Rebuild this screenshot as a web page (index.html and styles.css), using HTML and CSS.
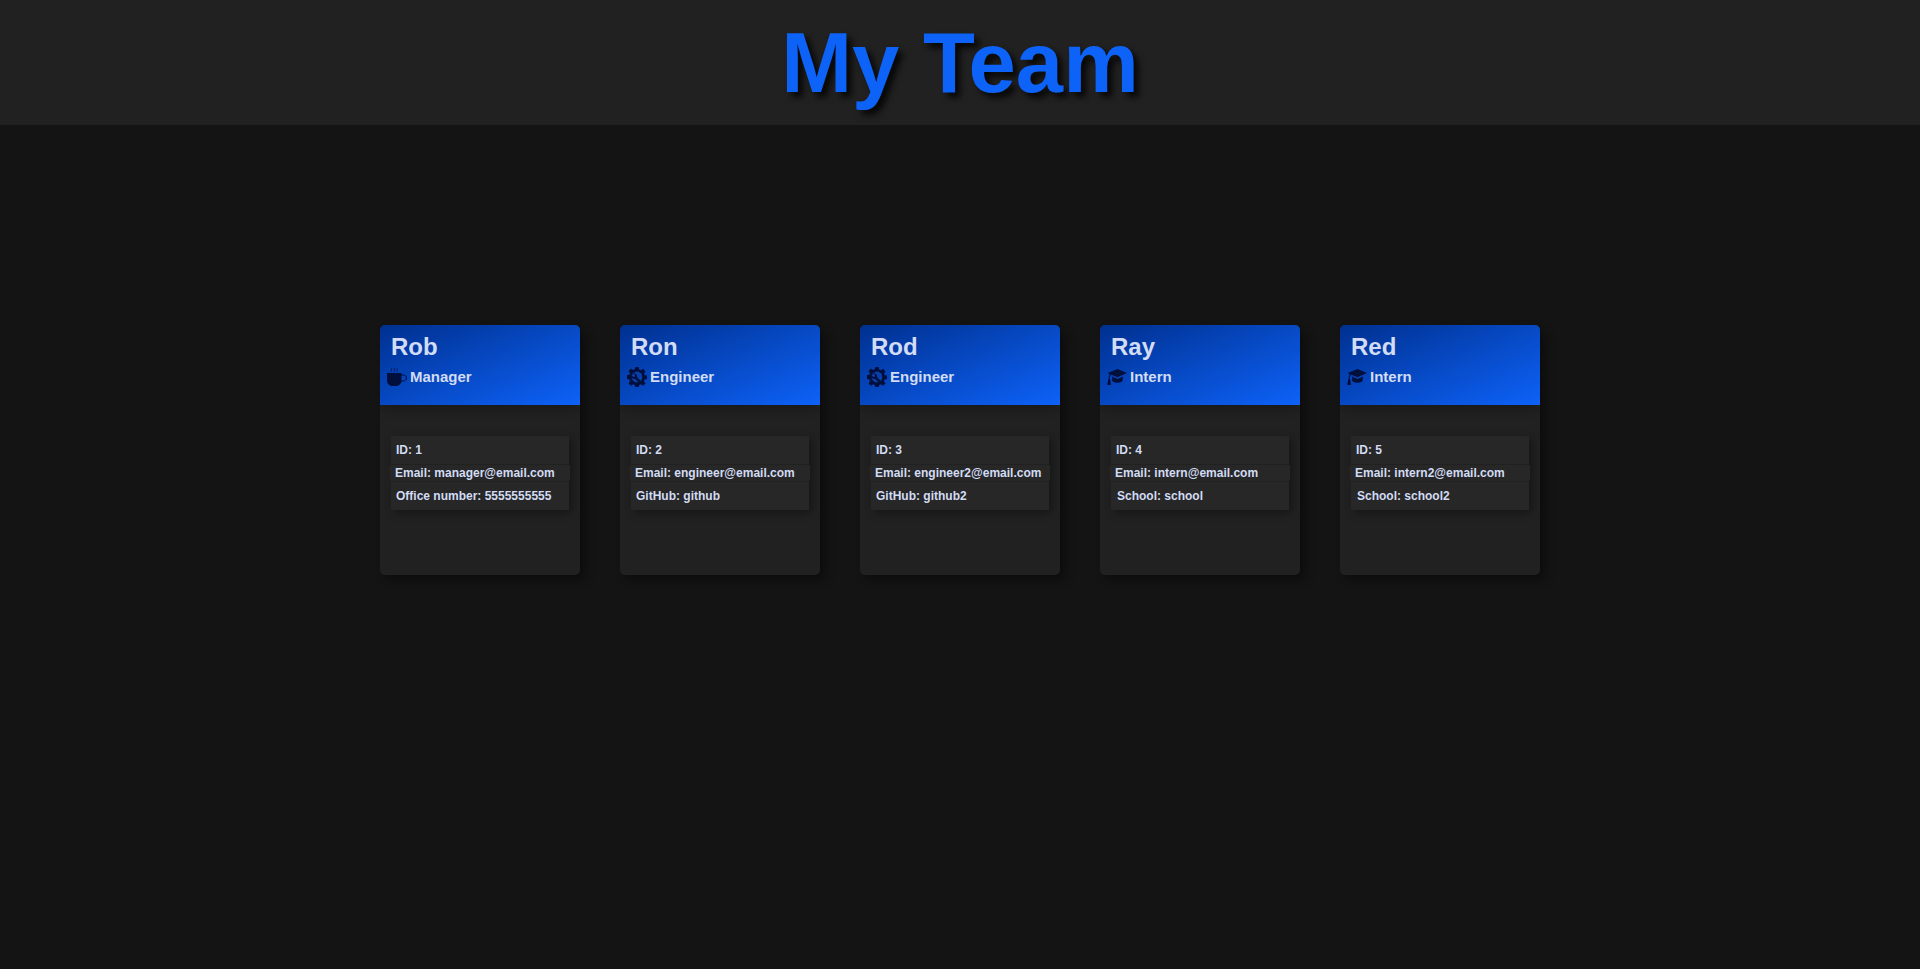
FILE: index.html
```
<!DOCTYPE html>
<html lang="en">
<head>
<meta charset="utf-8">
<title>My Team</title>
<link rel="stylesheet" href="styles.css">
</head>
<body>
<svg class="defs" width="0" height="0" aria-hidden="true">
  <symbol id="i-mug" viewBox="0 0 20 20">
    <path d="M0 6h14.500v7.500c0 3-2.400 5.500-5.400 5.500H5.400C2.400 19 0 16.500 0 13.500z"/>
    <path d="M14 8h2.300c1.900 0 3.200 1.300 3.200 3s-1.400 3-3.200 3h-2.800" fill="none" stroke="currentColor" stroke-width="1"/>
    <path d="M4.300 1v3.800M7.200 1v3.800M10.100 1v3.800" fill="none" stroke="currentColor" stroke-width="1" opacity=".6"/>
  </symbol>
  <symbol id="i-gear" viewBox="0 0 20 20">
    <path d="M8.300 0h3.400l.5 2.600 1.700.7 2.200-1.500 2.400 2.400-1.500 2.200.7 1.700 2.300.5v3.400l-2.300.5-.7 1.700 1.500 2.200-2.400 2.400-2.200-1.500-1.700.7-.5 2.300H8.300l-.5-2.300-1.700-.7-2.200 1.500-2.400-2.400 1.500-2.200-.7-1.700L0 11.700V8.300l2.300-.5.7-1.700-1.500-2.200 2.400-2.400 2.200 1.500 1.700-.7z"/>
    <circle cx="10" cy="10" r="5.400" fill="#0a3fa8"/>
    <path transform="matrix(-1 0 0 1 20 0)" d="M6.500 13.700l3.700-3.700a2.900 2.900 0 0 1 3.500-3.600l-1.800 1.800.3 1.500 1.500.3 1.800-1.800a2.900 2.900 0 0 1-3.600 3.500l-3.700 3.700z"/>
  </symbol>
  <symbol id="i-cap" viewBox="0 0 20 20">
    <path d="M10.500 2L20 6l-9.500 4.200-5.800-2.500-.9.500c-.5.300-.8.800-.8 1.400v1l-1.300.1v-1c0-1 .5-1.900 1.300-2.400L.8 6.100z"/>
    <path d="M5 9.500l5.500 2.400 5.300-2.300v3.500c0 1.500-2.400 2.700-5.300 2.700S5 14.600 5 13.100z"/>
    <path d="M1.300 11.500h1.700l1 6.500H.3z"/>
  </symbol>
</svg>

<header class="site-header">
  <h1 class="site-title">My Team</h1>
</header>

<main class="team">
  <article class="card">
    <div class="card-head">
      <h2 class="card-name">Rob</h2>
      <p class="card-role"><svg class="role-icon"><use href="#i-mug"/></svg>Manager</p>
    </div>
    <div class="card-body">
      <ul class="facts">
        <li class="fact">ID: 1</li>
        <li class="fact fact-wide">Email: manager@email.com</li>
        <li class="fact">Office number: 5555555555</li>
      </ul>
    </div>
  </article>

  <article class="card">
    <div class="card-head">
      <h2 class="card-name">Ron</h2>
      <p class="card-role"><svg class="role-icon"><use href="#i-gear"/></svg>Engineer</p>
    </div>
    <div class="card-body">
      <ul class="facts">
        <li class="fact">ID: 2</li>
        <li class="fact fact-wide">Email: engineer@email.com</li>
        <li class="fact">GitHub: github</li>
      </ul>
    </div>
  </article>

  <article class="card">
    <div class="card-head">
      <h2 class="card-name">Rod</h2>
      <p class="card-role"><svg class="role-icon"><use href="#i-gear"/></svg>Engineer</p>
    </div>
    <div class="card-body">
      <ul class="facts">
        <li class="fact">ID: 3</li>
        <li class="fact fact-wide">Email: engineer2@email.com</li>
        <li class="fact">GitHub: github2</li>
      </ul>
    </div>
  </article>

  <article class="card">
    <div class="card-head">
      <h2 class="card-name">Ray</h2>
      <p class="card-role"><svg class="role-icon"><use href="#i-cap"/></svg>Intern</p>
    </div>
    <div class="card-body">
      <ul class="facts">
        <li class="fact">ID: 4</li>
        <li class="fact fact-wide">Email: intern@email.com</li>
        <li class="fact fact-school">School: school</li>
      </ul>
    </div>
  </article>

  <article class="card">
    <div class="card-head">
      <h2 class="card-name">Red</h2>
      <p class="card-role"><svg class="role-icon"><use href="#i-cap"/></svg>Intern</p>
    </div>
    <div class="card-body">
      <ul class="facts">
        <li class="fact">ID: 5</li>
        <li class="fact fact-wide">Email: intern2@email.com</li>
        <li class="fact fact-school">School: school2</li>
      </ul>
    </div>
  </article>
</main>
</body>
</html>
```
FILE: styles.css
```
* {
  box-sizing: border-box;
}

html,
body {
  margin: 0;
  height: 100%;
}

body {
  background: #141414;
  color: #d2dcf4;
  font-family: "Liberation Sans", Arial, sans-serif;
  overflow: hidden;
}

.defs {
  position: absolute;
}

.site-header {
  height: 125px;
  background: #212121;
  display: flex;
  justify-content: center;
  align-items: center;
}

.site-title {
  margin: 0;
  font-size: 85px;
  font-weight: 700;
  line-height: 1;
  color: #0d62f8;
  text-shadow: 5px 5px 6px rgba(0, 0, 0, 0.8);
}

.team {
  display: flex;
  justify-content: center;
  gap: 40px;
  padding-top: 200px;
}

.card {
  width: 200px;
  height: 250px;
  background: #212121;
  border-radius: 5px;
  box-shadow: 5px 5px 10px rgba(0, 0, 0, 0.4);
  display: flex;
  flex-direction: column;
  overflow: hidden;
}

.card-head {
  height: 80px;
  padding: 8px 7px 0 11px;
  background: linear-gradient(to bottom right, #00308f 0%, #0d62f8 100%);
  box-shadow: 0 4px 10px rgba(0, 0, 0, 0.25);
}

.card-name {
  margin: 0;
  font-size: 24px;
  font-weight: 700;
  line-height: 28px;
}

.card-role {
  margin: 6px 0 0 -4px;
  display: flex;
  align-items: center;
  gap: 3px;
  font-size: 15px;
  font-weight: 700;
  line-height: 20px;
  height: 20px;
}

.role-icon {
  width: 20px;
  height: 20px;
  flex: none;
  fill: #010f3d;
  color: #010f3d;
}

.card-body {
  padding: 31px 11px 0;
}

.facts {
  margin: 0;
  padding: 0;
  list-style: none;
  box-shadow: 3px 3px 8px rgba(0, 0, 0, 0.35);
}

.fact {
  height: 28px;
  padding-left: 5px;
  background: #272727;
  font-size: 12px;
  font-weight: 700;
  line-height: 28px;
}

.fact-wide {
  height: 16px;
  margin: 1px -1px;
  line-height: 16px;
}

.fact-school {
  padding-left: 6px;
}
```
